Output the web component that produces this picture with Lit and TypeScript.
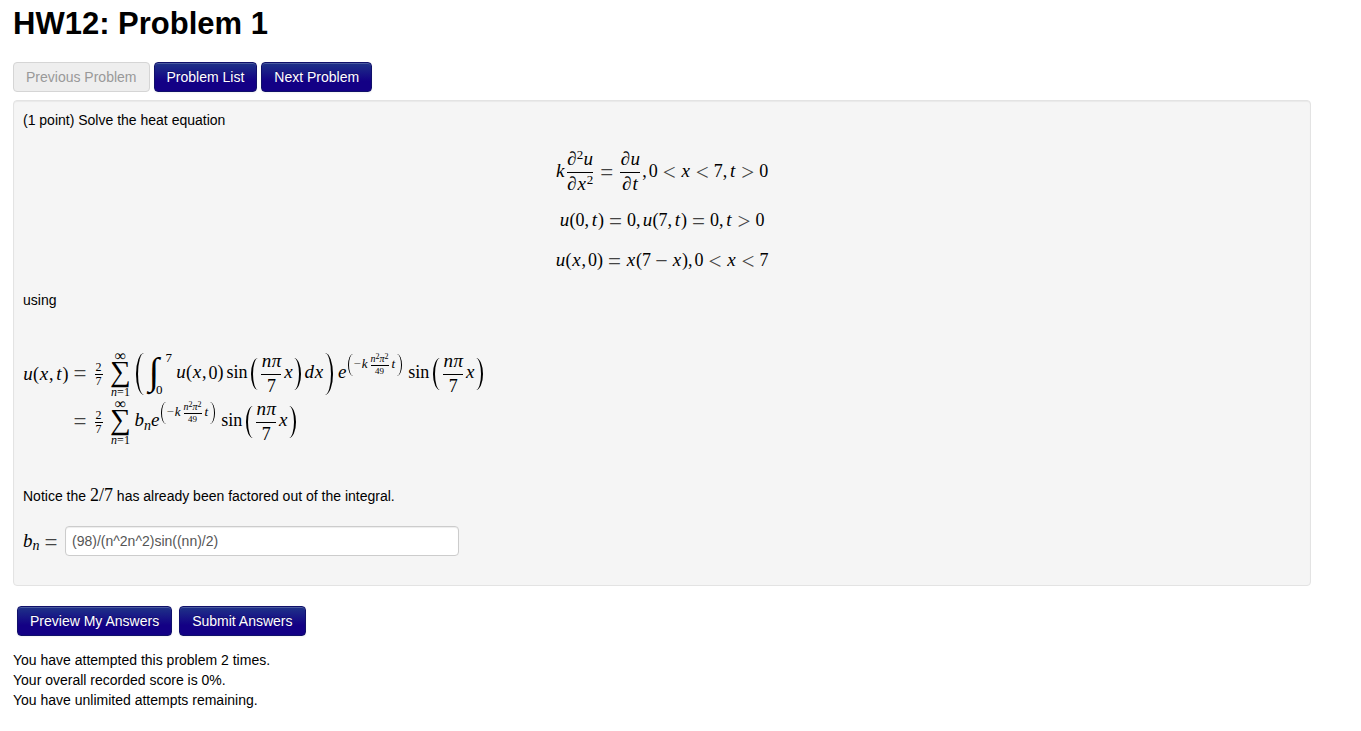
import { LitElement, html, css, type TemplateResult } from "lit";
import { customElement, state } from "lit/decorators.js";

type Part = TemplateResult | TemplateResult[] | string;

// Small builders for typeset math.
const v = (s: string) => html`<i class="v v-${s}">${s === "pi" ? "π" : s === "del" ? "∂" : s}</i>`;
const d = (s: string) => html`<span class="d">${s}</span>`;
const rel = (s: string) => html`<span class="rel">${s}</span>`;
const bin = (s: string) => html`<span class="bin">${s}</span>`;
const comma = html`<span class="comma">,</span>`;
const lp = html`<span class="p">(</span>`;
const rp = html`<span class="p">)</span>`;
const sup = (s: string) => html`<span class="sup">${s}</span>`;
const frac = (n: Part, m: Part, cls = "") =>
  html`<span class="frac ${cls}"><span class="num">${n}</span><span class="den">${m}</span></span>`;
const fence = (size: string, body: Part) =>
  html`<span class="fence left ${size}"></span>${body}<span class="fence right ${size}"></span>`;
const sum = html`<span class="sum"><span class="lim inf">∞</span><span class="sigma">∑</span><span class="lim"><i>n</i>=1</span></span>`;
const integral = html`<span class="int"><span class="sign">∫</span><span class="bounds"><span>7</span><span class="lower">0</span></span></span>`;
const sin = html`<span class="fn">sin</span>`;
const call = (f: string, a: Part, b: Part) => html`${v(f)}${lp}${a}${comma}${b}${rp}`;
const sinTerm = html`${sin}${fence("mid", html`${frac(html`${v("n")}${v("pi")}`, d("7"), "tight")}${v("x")}`)}`;
const expTerm = html`${v("e")}<span class="exp">${fence("small", html`<span class="minus">−</span><i class="ek">k</i>${frac(html`<i>n</i><span class="sup">2</span><i>π</i><span class="sup">2</span>`, "49", "tiny")}<i class="et">t</i>`)}</span>`;
const twoSevenths = frac("2", "7", "text");

@customElement("app-root")
export class AppRoot extends LitElement {
  @state() private answer = "(98)/(n^2n^2)sin((nn)/2)";

  static styles = css`
    :host {
      display: block;
      padding: 4px 50px 20px 13px;
      color: #000;
      font: 14px/20px "Liberation Sans", Arial, sans-serif;
    }
    h1 {
      margin: 0 0 19px;
      font-size: 31px;
      line-height: 39px;
      font-weight: bold;
    }
    .nav { display: flex; gap: 4px; margin-bottom: 8px; }
    .actions { display: flex; gap: 7px; padding: 0 4px; margin: 20px 0 14px; }
    button {
      box-sizing: border-box;
      margin: 0;
      padding: 4px 12px;
      font: inherit;
      color: #fff;
      border: 1px solid #10106a;
      border-radius: 4px;
      background: linear-gradient(#1f3388, #130085 65%, #130085);
      box-shadow: inset 0 1px 0 rgba(255, 255, 255, 0.2), 0 1px 2px rgba(0, 0, 0, 0.05);
      text-shadow: 0 -1px 0 rgba(0, 0, 0, 0.25);
      cursor: pointer;
    }
    button:disabled {
      color: #999;
      background: #eee;
      border-color: #d5d5d5;
      box-shadow: none;
      text-shadow: none;
      cursor: default;
    }
    .well {
      padding: 9px;
      border: 1px solid #e3e3e3;
      border-radius: 4px;
      background: #f5f5f5;
      box-shadow: inset 0 1px 1px rgba(0, 0, 0, 0.05);
    }
    p { margin: 0; }
    .display { display: flex; flex-direction: column; align-items: center; margin: 20px 0; }
    .display .math + .math { margin-top: 20px; }
    .display .tall + .math { margin-top: 15px; }
    .math {
      font-family: "Liberation Serif", "Times New Roman", serif;
      font-size: 18px;
      line-height: 20px;
      white-space: nowrap;
    }
    .v { display: inline-block; text-align: center; min-width: 10px; font-size: 19px; line-height: 18px; }
    .v-t { min-width: 7px; }
    .v-k { min-width: 9px; }
    .v-d { min-width: 9px; }
    .v-b { min-width: 8px; }
    .v-e { min-width: 8px; }
    .p { display: inline-block; width: 6px; text-align: center; }
    .comma { margin-right: 2px; }
    .rel, .bin {
      display: inline-block;
      width: 13px;
      margin: 0 5px;
      font-size: 23px;
      line-height: 16px;
      vertical-align: -3px;
      text-align: center;
      color: #444;
    }
    .bin { margin: 0 4px; font-size: 22px; vertical-align: -2px; }
    .sup { font-size: 13px; line-height: 0; vertical-align: 6px; }
    .sub { font-size: 14px; line-height: 0; vertical-align: -3px; font-style: italic; }
    .frac {
      display: inline-flex;
      flex-direction: column;
      vertical-align: middle;
      text-align: center;
      margin: 0 2px;
      line-height: 18px;
    }
    .num { padding: 0 1px 4px; border-bottom: 1px solid #000; }
    .den { padding: 2px 1px; }
    .text { font-size: 12px; line-height: 10px; margin: 0 3px; }
    .text .num { padding: 0 1px 2px; }
    .text .den { padding: 1px 1px; }
    .tight .num, .tight .den { padding-left: 0; padding-right: 0; }
    .tiny { font-size: 10px; line-height: 8px; margin: 0 2px; }
    .tiny .num { padding: 0 0 2px; }
    .tiny .den { padding: 1px 0; font-size: 9px; }
    .tiny .sup { font-size: 8px; vertical-align: 3px; }
    .fence {
      display: inline-block;
      box-sizing: border-box;
      vertical-align: middle;
      width: 7px;
      height: 32px;
      margin: 0 1px;
    }
    .left { border-left: 2px solid #000; border-radius: 100% 0 0 100% / 50% 0 0 50%; }
    .right { border-right: 2px solid #000; border-radius: 0 100% 100% 0 / 0 50% 50% 0; }
    .mid.right { margin-right: 3px; }
    .big { width: 8px; height: 42px; }
    .big.right { margin-right: 5px; }
    .small { width: 5px; height: 22px; margin: 0; border-width: 1px; }
    .fn { margin: 0 3px; }
    .sum {
      display: inline-flex;
      flex-direction: column;
      align-items: center;
      vertical-align: middle;
      width: 24px;
      margin: 0 2px 0 3px;
    }
    .sigma { font-size: 29px; line-height: 22px; padding-bottom: 5px; }
    .lim { font-size: 12px; line-height: 10px; }
    .inf { font-size: 16px; line-height: 8px; }
    .int { display: inline-flex; align-items: center; vertical-align: middle; height: 44px; margin-left: 4px; }
    .sign { font-size: 38px; line-height: 34px; padding-bottom: 6px; font-style: italic; }
    .bounds { display: flex; flex-direction: column; justify-content: space-between; height: 44px; font-size: 13px; line-height: 12px; text-align: right; width: 16px; margin: 0 4px 0 -3px; }
    .lower { text-align: left; }
    .exp { display: inline-block; vertical-align: 10px; font-size: 13px; line-height: 20px; margin: 0 3px 0 2px; }
    .minus { color: #555; }
    .ek { margin: 0 1px; }
    .et { margin: 0 2px 0 1px; }
    .series {
      display: grid;
      grid-template-columns: max-content max-content;
      grid-auto-rows: 48px;
      align-items: center;
      margin: 40px 0;
    }
    .lhs { text-align: right; }
    .inline { line-height: 16px; }
    .answer { display: flex; align-items: center; margin: 20px 0; }
    .answer label { width: 42px; }
    input {
      box-sizing: border-box;
      width: 394px;
      max-width: 100%;
      margin: 0;
      padding: 4px 6px;
      border: 1px solid #ccc;
      border-radius: 4px;
      background: #fff;
      color: #555;
      font: inherit;
      box-shadow: inset 0 1px 1px rgba(0, 0, 0, 0.075);
    }
  `;

  render() {
    return html`
      <h1>HW12: Problem 1</h1>
      <nav class="nav">
        <button disabled>Previous Problem</button>
        <button>Problem List</button>
        <button>Next Problem</button>
      </nav>
      <section class="well">
        <p>(1 point) Solve the heat equation</p>
        <div class="display">
          <div class="math tall">${v("k")}${frac(html`${v("del")}${sup("2")}${v("u")}`, html`${v("del")}${v("x")}${sup("2")}`, "tight")}${rel("=")}${frac(html`${v("del")}${v("u")}`, html`${v("del")}${v("t")}`, "tight")}${comma}${d("0")}${rel("<")}${v("x")}${rel("<")}${d("7")}${comma}${v("t")}${rel(">")}${d("0")}</div>
          <div class="math">${call("u", d("0"), v("t"))}${rel("=")}${d("0")}${comma}${call("u", d("7"), v("t"))}${rel("=")}${d("0")}${comma}${v("t")}${rel(">")}${d("0")}</div>
          <div class="math">${call("u", v("x"), d("0"))}${rel("=")}${v("x")}${lp}${d("7")}${bin("−")}${v("x")}${rp}${comma}${d("0")}${rel("<")}${v("x")}${rel("<")}${d("7")}</div>
        </div>
        <p>using</p>
        <div class="series math">
          <div class="lhs">${call("u", v("x"), v("t"))}</div>
          <div>${rel("=")}${twoSevenths}${sum}${fence("big", html`${integral}${call("u", v("x"), d("0"))}${sinTerm}${v("d")}${v("x")}`)}${expTerm}${sinTerm}</div>
          <div class="lhs"></div>
          <div>${rel("=")}${twoSevenths}${sum}${v("b")}<span class="sub">n</span>${expTerm}${sinTerm}</div>
        </div>
        <p>Notice the <span class="math inline">2/7</span> has already been factored out of the integral.</p>
        <div class="answer">
          <label class="math" for="bn">${v("b")}<span class="sub">n</span>${rel("=")}</label>
          <input id="bn" type="text" .value=${this.answer}
            @input=${(e: Event) => (this.answer = (e.target as HTMLInputElement).value)} />
        </div>
      </section>
      <div class="actions">
        <button>Preview My Answers</button>
        <button>Submit Answers</button>
      </div>
      <p>You have attempted this problem 2 times.</p>
      <p>Your overall recorded score is 0%.</p>
      <p>You have unlimited attempts remaining.</p>
    `;
  }
}
